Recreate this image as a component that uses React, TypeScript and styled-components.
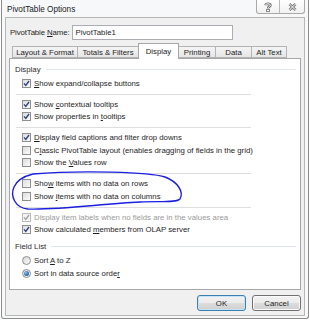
import styled, { createGlobalStyle } from 'styled-components';

const GlobalStyle = createGlobalStyle`
  html, body {
    margin: 0;
    padding: 0;
    background: #ffffff;
  }
  body {
    font-family: "Liberation Sans", Arial, sans-serif;
    font-size: 7.8px;
    color: #1e1e1e;
  }
`;

const Page = styled.div`
  position: relative;
  width: 310px;
  height: 320px;
  overflow: hidden;
`;

const Window = styled.div`
  box-sizing: border-box;
  width: 308px;
  height: 319px;
  margin-left: 1px;
  border: 1px solid #8c8c8c;
  border-top: none;
  border-radius: 0 0 3px 3px;
  background: #f7f8fa;
  display: flex;
  flex-direction: column;
`;

const TitleBar = styled.div`
  height: 17px;
  display: flex;
  align-items: flex-start;
  justify-content: space-between;
`;

const Title = styled.div`
  padding: 5px 0 0 5px;
  line-height: 10px;
  font-size: 8.2px;
  color: #1a1a1a;
`;

const CaptionButtons = styled.div`
  display: flex;
  margin-right: 3px;
  height: 14px;
  box-sizing: border-box;
  border: 1px solid #a9a9a9;
  border-top: none;
  border-radius: 0 0 3px 3px;
  background: linear-gradient(#ffffff, #f1f1f1);
`;

const CaptionButton = styled.div<{ $w: number; $divider?: boolean }>`
  width: ${p => p.$w}px;
  display: flex;
  align-items: center;
  justify-content: center;
  border-left: ${p => (p.$divider ? '1px solid #b8b8b8' : 'none')};
`;

const Client = styled.div`
  flex: 1;
  margin: 0 3px 2px 3px;
  border: 1px solid #b7b7b7;
  background: #f0f0f0;
  display: flex;
  flex-direction: column;
`;

const NameRow = styled.div`
  display: flex;
  align-items: center;
  gap: 2px;
  margin: 7px 0 0 4px;
  height: 15px;
`;

const NameLabel = styled.label`
  flex: none;
  white-space: nowrap;
  letter-spacing: -0.1px;
`;

const NameInput = styled.div`
  box-sizing: border-box;
  width: 161px;
  height: 15px;
  border: 1px solid #abadb3;
  background: #ffffff;
  padding-left: 3px;
  line-height: 13px;
`;

const TabStrip = styled.div`
  display: flex;
  align-items: flex-end;
  height: 15px;
  margin: 3px 0 0 6px;
  position: relative;
  z-index: 1;
`;

const Tab = styled.div<{ $w: number; $active?: boolean; $first?: boolean }>`
  box-sizing: border-box;
  width: ${p => p.$w}px;
  height: ${p => (p.$active ? 16 : 12)}px;
  margin-left: ${p => (p.$first ? 0 : -1)}px;
  margin-bottom: ${p => (p.$active ? -1 : 0)}px;
  border: 1px solid ${p => (p.$active ? '#a7a7a7' : '#b3b3b3')};
  border-bottom: ${p => (p.$active ? 'none' : '1px solid #b3b3b3')};
  background: ${p => (p.$active ? '#ffffff' : 'linear-gradient(#f5f5f5, #e6e6e6)')};
  display: flex;
  align-items: center;
  justify-content: center;
  white-space: nowrap;
  position: relative;
  z-index: ${p => (p.$active ? 2 : 0)};
  padding-top: ${p => (p.$active ? 0 : 1)}px;
`;

const Panel = styled.div`
  flex: 1;
  margin: 0 3px;
  border: 1px solid #a7a7a7;
  background: #ffffff;
  padding: 4px 4px 0 5px;
  display: flex;
  flex-direction: column;
`;

const GroupHeader = styled.div<{ $top?: number }>`
  display: flex;
  align-items: center;
  height: 12px;
  margin-top: ${p => p.$top ?? 0}px;
  margin-bottom: 2px;
  color: #2b2b2b;

  &::after {
    content: '';
    flex: 1;
    height: 1px;
    margin-left: 5px;
    background: #dfe5ec;
  }
`;

const Separator = styled.div`
  width: 235px;
  height: 1px;
  margin: 4px 0 3.5px 1px;
  background: #dedede;
`;

const OptionRow = styled.div<{ $h?: number; $disabled?: boolean }>`
  display: flex;
  align-items: center;
  height: ${p => p.$h ?? 12.5}px;
  padding-left: 7px;
  gap: 3px;
  white-space: nowrap;
  color: ${p => (p.$disabled ? '#9a9a9a' : '#1e1e1e')};
`;

const Box = styled.span<{ $disabled?: boolean }>`
  box-sizing: border-box;
  width: 9px;
  height: 9px;
  flex: none;
  border: 1px solid ${p => (p.$disabled ? '#bcbcbc' : '#8e8f8f')};
  background: ${p =>
    p.$disabled ? '#f4f4f4' : 'linear-gradient(135deg, #dcdcdc, #fbfbfb)'};
  display: flex;
  align-items: center;
  justify-content: center;
`;

const Radio = styled.span<{ $on?: boolean }>`
  box-sizing: border-box;
  width: 9px;
  height: 9px;
  flex: none;
  border-radius: 50%;
  border: 1px solid #8e8f8f;
  background: linear-gradient(135deg, #d8d8d8, #fbfbfb);
  display: flex;
  align-items: center;
  justify-content: center;

  &::after {
    content: '';
    display: ${p => (p.$on ? 'block' : 'none')};
    width: 5px;
    height: 5px;
    border-radius: 50%;
    background: radial-gradient(circle at 35% 35%, #8fc3f2, #1c5fa8 70%);
  }
`;

const Key = styled.u`
  text-decoration-thickness: 1px;
  text-underline-offset: 1px;
`;

const ButtonRow = styled.div`
  display: flex;
  justify-content: flex-end;
  gap: 6px;
  margin: 5px 3px 4px 0;
`;

const DialogButton = styled.button<{ $default?: boolean }>`
  box-sizing: border-box;
  width: 49px;
  height: 16px;
  padding: 0;
  font-family: inherit;
  font-size: 7.8px;
  color: #1e1e1e;
  border-radius: 3px;
  border: 1px solid ${p => (p.$default ? '#3c7fb1' : '#707070')};
  background: linear-gradient(#f2f2f2 0%, #ebebeb 50%, #dddddd 51%, #cfcfcf 100%);
  box-shadow: ${p => (p.$default ? 'inset 0 0 0 1px #c5e4f7' : 'inset 0 0 0 1px #fbfbfb')};
`;

const Annotation = styled.svg`
  position: absolute;
  left: 0;
  top: 0;
  pointer-events: none;
`;

const Check = ({ disabled }: { disabled?: boolean }) => (
  <svg width="7" height="7" viewBox="0 0 7 7">
    <path
      d="M1 3.4 L2.8 5.4 L6 1"
      fill="none"
      stroke={disabled ? '#a4a4a4' : '#2e447c'}
      strokeWidth="1.4"
    />
  </svg>
);

const CheckOption = ({ checked, disabled, children }: { checked?: boolean; disabled?: boolean; children: React.ReactNode }) => (
  <OptionRow $disabled={disabled}>
    <Box $disabled={disabled}>{checked && <Check disabled={disabled} />}</Box>
    <span>{children}</span>
  </OptionRow>
);

const tabs = [
  { label: 'Layout & Format', w: 66 },
  { label: 'Totals & Filters', w: 62 },
  { label: 'Display', w: 41, active: true },
  { label: 'Printing', w: 38 },
  { label: 'Data', w: 37 },
  { label: 'Alt Text', w: 36 },
];

const App = () => {
  return (
    <Page>
      <GlobalStyle />
      <Window>
        <TitleBar>
          <Title>PivotTable Options</Title>
          <CaptionButtons>
            <CaptionButton $w={22}>
              <svg width="8" height="10" viewBox="0 0 8 10">
                <path d="M1.6 3.2 C1.6 1.3 6.4 1.3 6.4 3.2 C6.4 4.6 4 4.6 4 6.4" fill="none" stroke="#6d6d6d" strokeWidth="2.6" />
                <path d="M1.6 3.2 C1.6 1.3 6.4 1.3 6.4 3.2 C6.4 4.6 4 4.6 4 6.4" fill="none" stroke="#ffffff" strokeWidth="1" />
                <rect x="2.6" y="7.4" width="2.8" height="2.2" fill="#ffffff" stroke="#6d6d6d" strokeWidth="0.8" />
              </svg>
            </CaptionButton>
            <CaptionButton $w={24} $divider>
              <svg width="9" height="8" viewBox="0 0 9 8">
                <path d="M1.5 1 L7.5 7 M7.5 1 L1.5 7" stroke="#777777" strokeWidth="2.6" />
                <path d="M1.5 1 L7.5 7 M7.5 1 L1.5 7" stroke="#ffffff" strokeWidth="1" />
              </svg>
            </CaptionButton>
          </CaptionButtons>
        </TitleBar>

        <Client>
          <NameRow>
            <NameLabel>
              PivotTable <Key>N</Key>ame:
            </NameLabel>
            <NameInput>PivotTable1</NameInput>
          </NameRow>

          <TabStrip>
            {tabs.map((t, i) => (
              <Tab key={t.label} $w={t.w} $active={t.active} $first={i === 0}>
                {t.label}
              </Tab>
            ))}
          </TabStrip>

          <Panel>
            <GroupHeader>Display</GroupHeader>
            <CheckOption checked>
              <Key>S</Key>how expand/collapse buttons
            </CheckOption>
            <Separator />
            <CheckOption checked>
              Show <Key>c</Key>ontextual tooltips
            </CheckOption>
            <CheckOption checked>
              Show properties in <Key>t</Key>ooltips
            </CheckOption>
            <Separator />
            <CheckOption checked>
              <Key>D</Key>isplay field captions and filter drop downs
            </CheckOption>
            <CheckOption>
              C<Key>l</Key>assic PivotTable layout (enables dragging of fields in the grid)
            </CheckOption>
            <CheckOption>
              Show the <Key>V</Key>alues row
            </CheckOption>
            <Separator />
            <CheckOption>
              Sho<Key>w</Key> items with no data on rows
            </CheckOption>
            <CheckOption>
              Show <Key>i</Key>tems with no data on columns
            </CheckOption>
            <Separator />
            <CheckOption checked disabled>
              Display item labels when no fields are in the values area
            </CheckOption>
            <CheckOption checked>
              Show calculated <Key>m</Key>embers from OLAP server
            </CheckOption>

            <GroupHeader $top={4}>Field List</GroupHeader>
            <OptionRow $h={13}>
              <Radio />
              <span>
                Sort <Key>A</Key> to Z
              </span>
            </OptionRow>
            <OptionRow $h={13}>
              <Radio $on />
              <span>
                Sort in data source orde<Key>r</Key>
              </span>
            </OptionRow>
          </Panel>

          <ButtonRow>
            <DialogButton $default>OK</DialogButton>
            <DialogButton>Cancel</DialogButton>
          </ButtonRow>
        </Client>
      </Window>

      <Annotation width="310" height="320" viewBox="0 0 310 320">
        <path
          d="M33 174 C80 170 150 172 165 177 C178 182 184 192 180 199 C176 203 160 201 140 202 C100 204 60 210 28 209 C15 208 10 196 14 187 C17 180 25 176 33 174"
          fill="none"
          stroke="#1a1ee0"
          strokeWidth="1.4"
        />
      </Annotation>
    </Page>
  );
};

export default App;
